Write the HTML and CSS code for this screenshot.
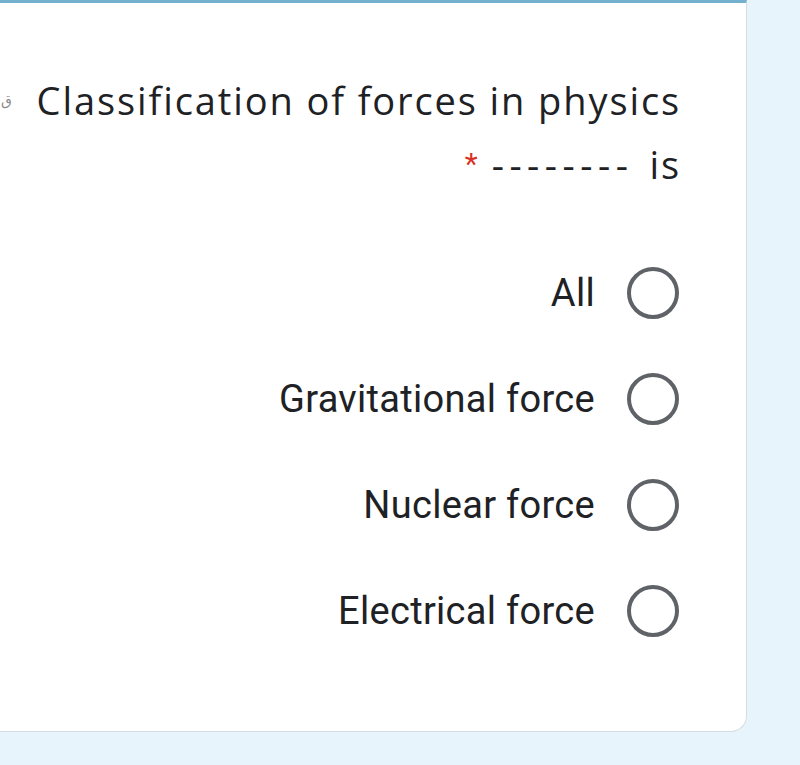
FILE: index.html
```html
<!DOCTYPE html>
<html lang="en">

<head>
    <meta charset="UTF-8">
    <meta name="viewport" content="width=device-width, initial-scale=1.0">
    <title>Question</title>
    <link rel="stylesheet" href="styles.css">
</head>

<body>
    <div class="card">
        <div class="question">
            <div class="q-line">
                <span class="cut-char">ق</span>
                <span class="q-text">Classification of forces in physics</span>
            </div>
            <div class="q-line q-line2">
                <span class="required">*</span>
                <span class="blank">--------</span>
                <span class="q-text">is</span>
            </div>
        </div>
        <div class="options">
            <label class="option">
                <span class="option-text">All</span>
                <span class="radio"></span>
            </label>
            <label class="option">
                <span class="option-text">Gravitational force</span>
                <span class="radio"></span>
            </label>
            <label class="option">
                <span class="option-text">Nuclear force</span>
                <span class="radio"></span>
            </label>
            <label class="option">
                <span class="option-text">Electrical force</span>
                <span class="radio"></span>
            </label>
        </div>
    </div>
</body>

</html>
```

FILE: styles.css
```css
* {
    margin: 0;
    padding: 0;
    box-sizing: border-box;
}

body {
    width: 800px;
    height: 765px;
    overflow: hidden;
    background: #e8f4fc;
    font-family: Roboto, "Liberation Sans", sans-serif;
    color: #202124;
}

.card {
    width: 767px;
    height: 732px;
    margin-left: -20px;
    background: #fff;
    border-top: 3px solid #74b1cf;
    border-right: 1px solid #d6dde2;
    border-bottom: 1px solid #d6dde2;
    border-bottom-right-radius: 16px;
    padding: 65px 67px 0 0;
}

.question {
    font-family: "Open Sans", Roboto, sans-serif;
    font-size: 38px;
    line-height: 64px;
    color: #202124;
}

.q-line {
    display: flex;
    justify-content: space-between;
    align-items: center;
}

.q-line2 {
    justify-content: flex-end;
    gap: 12px;
}

.q-text {
    letter-spacing: 1.9px;
    margin-right: -2px;
}

.cut-char {
    font-family: "Noto Sans", "DejaVu Sans", sans-serif;
    font-size: 14px;
    line-height: 20px;
    color: #8a8a8a;
    margin-left: 21px;
}

.blank {
    letter-spacing: 5.5px;
    margin-right: 4px;
}

.required {
    font-family: Roboto, sans-serif;
    color: #d93025;
    font-size: 30px;
    margin-right: 2px;
}

.options {
    margin-top: 44px;
    display: flex;
    flex-direction: column;
}

.option {
    height: 106px;
    display: flex;
    justify-content: flex-end;
    align-items: center;
    gap: 32px;
    font-size: 38px;
    letter-spacing: 0.3px;
    color: #202124;
}

.radio {
    width: 52px;
    height: 52px;
    border: 4px solid #5f6368;
    border-radius: 50%;
}
```
